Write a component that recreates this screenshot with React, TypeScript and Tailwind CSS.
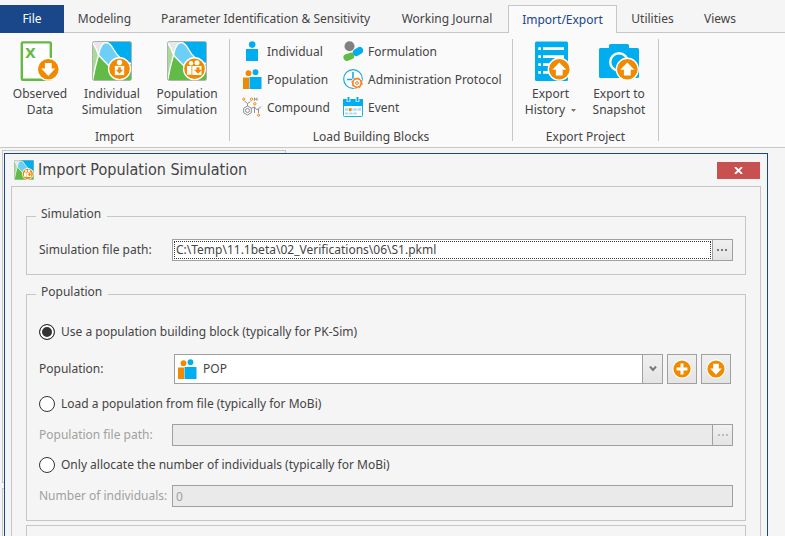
import { useId, useState } from "react";
import type { ReactNode } from "react";

const TABS = [
  { label: "File", width: "w-16" },
  { label: "Modeling", width: "w-[81px]" },
  { label: "Parameter Identification & Sensitivity", width: "w-[241px]" },
  { label: "Working Journal", width: "w-[122px]" },
  { label: "Import/Export", width: "w-[109px]" },
  { label: "Utilities", width: "w-[71px]" },
  { label: "Views", width: "w-16" },
];

type PopulationSource = "block" | "file" | "count";

/* ---------- icons ---------- */

function DownArrow() {
  return <path d="M-3.4 -6.2H3.4V-0.6H7L0 6.8L-7 -0.6H-3.4Z" fill="#fff" />;
}

function Badge({ children }: { children: ReactNode }) {
  return (
    <>
      <circle r="11.6" fill="#fff" />
      <circle r="10.3" fill="#f18a00" />
      {children}
    </>
  );
}

function ObservedDataIcon() {
  return (
    <svg viewBox="0 0 40 40" className="size-10">
      <rect x="1.8" y="1.4" width="29" height="37.4" rx="1" fill="#fff" stroke="#65b945" strokeWidth="2.4" />
      <text x="5" y="17" fontSize="14" fontWeight="700" fill="#65b945" className="font-[DejaVu_Sans]">X</text>
      <g transform="translate(28.3 28.2)">
        <Badge><DownArrow /></Badge>
      </g>
    </svg>
  );
}

function SimulationIcon({ kind, className }: { kind: "individual" | "population"; className: string }) {
  const clip = useId();
  return (
    <svg viewBox="0 0 40 40" className={className}>
      <clipPath id={clip}>
        <rect x="0.5" y="0.5" width="39" height="39" rx="2" />
      </clipPath>
      <g clipPath={`url(#${clip})`}>
        <rect width="40" height="40" fill="#62bb46" />
        <path d="M0 40V3Q4 7 6.5 14Q3 26 1 40Z" fill="#aad99a" />
        <path d="M0 0H14Q9 3 6.5 14Q4 7 0 3Z" fill="#e6e7e8" />
        <path d="M14 1Q18 1 22 9Q27 19 40 23V0H14Z" fill="#00aeef" />
        <path d="M6.5 14Q9 1.5 14 1.5Q18 1.5 22 9Q27 19 40 23L24 33Q14 22 6.5 14Z" fill="#6dcff6" />
        <path d="M0.5 40Q3 26 6.5 14Q9 1.5 14 1.5Q18 1.5 22 9Q27 19 40 23" fill="none" stroke="#fff" strokeWidth="1.3" />
        <path d="M0 1Q4 6 6.5 14Q12 20 18 26Q24 32 28 40" fill="none" stroke="#fff" strokeWidth="1.3" />
      </g>
      <rect x="0.5" y="0.5" width="39" height="39" rx="2" fill="none" stroke="#aeb3b0" />
      <g transform="translate(27.5 27.7)">
        <Badge>
          {kind === "individual" ? (
            <>
              <circle cy="-6.2" r="2.7" fill="#fff" />
              <rect x="-4.7" y="-2.8" width="9.4" height="9.2" fill="#fff" />
              <path d="M-1.3 -1.5H1.3V1H3.6L0 5L-3.6 1H-1.3Z" fill="#f18a00" />
            </>
          ) : (
            <>
              <circle cx="-3.5" cy="-5.5" r="2.2" fill="#fff" />
              <circle cx="2.5" cy="-6" r="2.5" fill="#fff" />
              <path d="M-7.5 -2.8H-3V6H-7.5ZM-2.2 -2.8H7V6.4H-2.2Z" fill="#fff" />
              <path d="M2 -1.5H5V1H7.5L3.5 5L-0.5 1H2Z" fill="#f18a00" />
            </>
          )}
        </Badge>
      </g>
    </svg>
  );
}

function HistoryIcon() {
  return (
    <svg viewBox="0 0 40 40" className="size-10">
      <rect x="4" y="0.5" width="33" height="39.5" rx="1.5" fill="#00aeef" />
      <g fill="#fff">
        <path d="M7.3 6.3H10V9H7.3ZM12 6.3H33V9H12Z" />
        <path d="M7.3 14.3H10V17H7.3ZM12 14.3H33V17H12Z" />
        <path d="M7.3 22.3H10V25H7.3ZM12 22.3H22V25H12Z" />
        <path d="M7.3 30H10V32.7H7.3ZM12 30H22V32.7H12Z" />
      </g>
      <g transform="translate(28.3 28.2)">
        <Badge><g transform="scale(1 -1)"><DownArrow /></g></Badge>
      </g>
    </svg>
  );
}

function SnapshotIcon() {
  return (
    <svg viewBox="0 0 40 40" className="size-10">
      <path d="M1.5 7H10V4.5Q10 3 11.5 3H28.5Q30 3 30 4.5V7H38.5Q40 7 40 8.5V35.5Q40 37 38.5 37H1.5Q0 37 0 35.5V8.5Q0 7 1.5 7Z" fill="#00aeef" />
      <circle cx="20" cy="21" r="8.8" fill="none" stroke="#fff" strokeWidth="2.4" />
      <g transform="translate(28.3 28.2)">
        <Badge><g transform="scale(1 -1)"><DownArrow /></g></Badge>
      </g>
    </svg>
  );
}

function IndividualIcon() {
  return (
    <svg viewBox="0 0 20 20" className="size-5">
      <circle cx="10.2" cy="3.6" r="3.3" fill="#00aeef" />
      <rect x="4" y="8" width="12" height="12" fill="#00aeef" />
    </svg>
  );
}

function PopulationIcon() {
  return (
    <svg viewBox="0 0 20 20" className="size-5">
      <circle cx="6.5" cy="4.2" r="2.9" fill="#f18a00" />
      <circle cx="13.5" cy="3.2" r="2.9" fill="#00aeef" />
      <rect x="1" y="8.5" width="6" height="11.5" fill="#f18a00" />
      <rect x="7.5" y="8" width="12" height="12" fill="#00aeef" />
    </svg>
  );
}

function CompoundIcon() {
  return (
    <svg viewBox="0 0 20 20" className="size-5" fill="none" stroke="#8f8f8f">
      <path d="M5.5 9L9.3 11.2V15.8L5.5 18L1.7 15.8V11.2Z" />
      <circle cx="5.5" cy="13.5" r="2" />
      <path d="M5.5 9V6.5L2.5 4M5.5 6.5L8.5 4.5M9.3 11.2L12.5 10V16M12.5 10L14.5 12.5L16.5 12M16.5 16V12L19 9.5" />
      <g stroke="#f18a00">
        <circle cx="1.8" cy="2.2" r="1.1" />
        <circle cx="9.5" cy="2.2" r="1.2" />
        <circle cx="12.8" cy="6.8" r="1.2" />
        <circle cx="16.6" cy="18.2" r="1.1" />
      </g>
      <path d="M12.5 0.7V3.7M15 0.7V3.7M12.5 2.2H15" />
    </svg>
  );
}

function FormulationIcon() {
  return (
    <svg viewBox="0 0 20 20" className="size-5">
      <circle cx="6.5" cy="5.3" r="5" fill="#808080" />
      <rect x="9.5" y="7" width="11" height="7" rx="3.5" fill="#00aeef" transform="rotate(-32 15 10.5)" />
      <rect x="0.3" y="12.3" width="11" height="6.8" rx="3.4" fill="#62bb46" transform="rotate(-18 6 15.7)" />
    </svg>
  );
}

function ProtocolIcon() {
  return (
    <svg viewBox="0 0 20 20" className="size-5" fill="none">
      <circle cx="10" cy="10" r="9.3" fill="#fff" stroke="#1ba8e0" strokeWidth="1.2" />
      <path d="M10 3V10.5H4" stroke="#1ba8e0" strokeWidth="1.6" />
      <circle cx="14" cy="14" r="6" fill="#fff" />
      <circle cx="14" cy="14" r="4.2" stroke="#ef7d22" strokeWidth="1.6" />
      <circle cx="14" cy="14" r="5.2" stroke="#ef7d22" strokeWidth="1" strokeDasharray="2 2.08" />
      <circle cx="14" cy="14" r="1.4" stroke="#ef7d22" />
    </svg>
  );
}

function EventIcon() {
  return (
    <svg viewBox="0 0 20 20" className="size-5">
      <rect x="0.5" y="2.5" width="19" height="17" rx="1" fill="#fff" stroke="#1bb0ec" />
      <path d="M0 2H20V9H0Z" fill="#00aeef" />
      <path d="M5.5 0V5M14.5 0V5" stroke="#fafafa" strokeWidth="3.6" />
      <path d="M5.5 0V4.5M14.5 0V4.5" stroke="#00aeef" strokeWidth="2" />
      <path d="M2 12.5H18" stroke="#a5ddf7" strokeWidth="2.6" strokeDasharray="3.4 0.8" />
      <path d="M2 16.5H14" stroke="#a5ddf7" strokeWidth="2" strokeDasharray="3.4 0.8" />
      <rect x="6" y="11.2" width="2.4" height="3" fill="#f18a00" />
    </svg>
  );
}

function Dots() {
  return (
    <svg viewBox="0 0 10 2" className="h-[2px] w-[10px]" fill="currentColor">
      <path d="M0 0H2V2H0ZM4 0H6V2H4ZM8 0H10V2H8Z" />
    </svg>
  );
}

/* ---------- ribbon ---------- */

function LargeButton({ icon, lines, menu, width }: { icon: ReactNode; lines: [string, string]; menu?: boolean; width: string }) {
  return (
    <button className={`flex flex-col items-center whitespace-nowrap ${width}`}>
      {icon}
      <span className="mt-[5px]">{lines[0]}</span>
      <span className="flex items-center gap-[6px]">
        {lines[1]}
        {menu && <svg viewBox="0 0 5 3" className="h-[3px] w-[5px]"><path d="M0 0H5L2.5 3Z" fill="#777" /></svg>}
      </span>
    </button>
  );
}

function SmallButton({ icon, label }: { icon: ReactNode; label: string }) {
  return (
    <button className="flex h-5 items-center gap-[5px] whitespace-nowrap">
      {icon}
      <span className="pt-[2px]">{label}</span>
    </button>
  );
}

function RibbonGroup({ title, width, children }: { title: string; width: string; children: ReactNode }) {
  return (
    <section className={`flex shrink-0 flex-col justify-between border-r border-[#c6c6c6] pt-[2px] ${width}`}>
      {children}
      <h2 className="text-center leading-2">{title}</h2>
    </section>
  );
}

/* ---------- form ---------- */

function Group({ title, children }: { title: string; children: ReactNode }) {
  return (
    <fieldset className="min-w-0 border border-[#c6c6c6] px-3 pb-[13px]">
      <legend className="-ml-[3px] pr-[6px] pb-[5px] pl-[5px]">{title}</legend>
      {children}
    </fieldset>
  );
}

function SourceRadio({ label, checked, onChange, className }: { label: string; checked: boolean; onChange: () => void; className: string }) {
  return (
    <label className={`flex items-center gap-[6px] ${className}`}>
      <input
        type="radio"
        name="source"
        checked={checked}
        onChange={onChange}
        className="size-4 appearance-none rounded-full border border-[#333] bg-white checked:bg-[#333] checked:shadow-[inset_0_0_0_2px_#fff]"
      />
      {label}
    </label>
  );
}

export default function App() {
  const [activeTab, setActiveTab] = useState("Import/Export");
  const [source, setSource] = useState<PopulationSource>("block");
  const [simulationPath, setSimulationPath] = useState("C:\\Temp\\11.1beta\\02_Verifications\\06\\S1.pkml");

  const fileDisabled = source !== "file";
  const countDisabled = source !== "count";

  return (
    <div className="flex h-screen flex-col overflow-hidden bg-[#f5f5f5] font-['Noto_Sans',sans-serif] text-[12px] leading-4 text-[#444]">
      {/* Tabs */}
      <nav className="flex shrink-0 pt-[5px]">
        {TABS.map(({ label, width }) => (
          <button
            key={label}
            onClick={() => setActiveTab(label)}
            className={`h-7 shrink-0 whitespace-nowrap ${width} ${
              label === "File"
                ? "bg-[#19478a] text-white"
                : label === activeTab
                  ? "border border-b-0 border-[#c6c6c6] bg-[#fafafa] text-[#19478a]"
                  : "border-b border-[#c6c6c6]"
            }`}
          >
            {label}
          </button>
        ))}
        <div className="flex-1 border-b border-[#c6c6c6]" />
      </nav>

      {/* Ribbon */}
      <div className="flex h-[115px] shrink-0 border-b border-[#c6c6c6] bg-[#fafafa] pt-[6px] pb-[6px]">
        <RibbonGroup title="Import" width="w-[230px]">
          <div className="flex pl-[3px]">
            <LargeButton icon={<ObservedDataIcon />} lines={["Observed", "Data"]} width="w-[74px]" />
            <LargeButton icon={<SimulationIcon kind="individual" className="size-10" />} lines={["Individual", "Simulation"]} width="w-[70px]" />
            <LargeButton icon={<SimulationIcon kind="population" className="size-10" />} lines={["Population", "Simulation"]} width="w-20" />
          </div>
        </RibbonGroup>
        <RibbonGroup title="Load Building Blocks" width="w-[283px]">
          <div className="grid grid-cols-[101px_1fr] gap-y-2 pl-3">
            <SmallButton icon={<IndividualIcon />} label="Individual" />
            <SmallButton icon={<FormulationIcon />} label="Formulation" />
            <SmallButton icon={<PopulationIcon />} label="Population" />
            <SmallButton icon={<ProtocolIcon />} label="Administration Protocol" />
            <SmallButton icon={<CompoundIcon />} label="Compound" />
            <SmallButton icon={<EventIcon />} label="Event" />
          </div>
        </RibbonGroup>
        <RibbonGroup title="Export Project" width="w-[146px]">
          <div className="flex pl-1">
            <LargeButton icon={<HistoryIcon />} lines={["Export", "History"]} menu width="w-[67px]" />
            <LargeButton icon={<SnapshotIcon />} lines={["Export to", "Snapshot"]} width="w-[70px]" />
          </div>
        </RibbonGroup>
      </div>

      <main className="grid min-h-0 flex-1">
        {/* Docked panels behind the dialog */}
        <div className="col-start-1 row-start-1 flex w-[286px] flex-col gap-[5px] pt-[2px] pl-[2px]">
          <div className="h-[333px] shrink-0 border border-[#c6c6c6]" />
          <div className="h-16 shrink-0 border border-[#c6c6c6]" />
        </div>

        {/* Dialog */}
        <div
          role="dialog"
          aria-labelledby="dialog-title"
          className="z-10 col-start-1 row-start-1 mt-[5px] mr-[17px] ml-1 flex min-w-0 flex-col border border-b-0 border-[#19478a] bg-[#f5f5f5] px-[6px]"
        >
          <header className="flex h-8 shrink-0 items-center gap-1 pr-px pl-[3px]">
            <SimulationIcon kind="population" className="size-5" />
            <h1 id="dialog-title" className="flex-1 font-['DejaVu_Sans_Condensed','Noto_Sans',sans-serif] text-[16px]">Import Population Simulation</h1>
            <button aria-label="Close" className="flex h-[17px] w-[43px] items-center justify-center bg-[#c75050]">
              <svg viewBox="0 0 9 7" className="h-[7px] w-[9px]"><path d="M1 0L8 7M8 0L1 7" stroke="#fff" strokeWidth="1.8" /></svg>
            </button>
          </header>

          <form className="flex flex-1 flex-col border border-b-0 border-[#c6c6c6] px-[14px] pt-[19px]">
            <Group title="Simulation">
              <div className="flex items-center pt-3">
                <label htmlFor="simulation-path" className="w-[133px] shrink-0">Simulation file path:</label>
                <div className="flex h-[22px] min-w-0 flex-1 border border-[#a0a0a0] bg-white">
                  <div className="flex min-w-0 flex-1 p-px">
                    <input
                      id="simulation-path"
                      value={simulationPath}
                      onChange={(e) => setSimulationPath(e.target.value)}
                      className="min-w-0 flex-1 border border-dotted border-[#333] px-px outline-none"
                    />
                  </div>
                  <button type="button" aria-label="Browse simulation file" className="flex w-5 items-center justify-center border-l border-[#a0a0a0] bg-linear-to-b from-[#f0f0f0] to-[#e4e4e4] pr-[2px] text-[#777]">
                    <Dots />
                  </button>
                </div>
              </div>
            </Group>

            <div className="mt-[9px]">
              <Group title="Population">
                <SourceRadio
                  label="Use a population building block (typically for PK-Sim)"
                  checked={source === "block"}
                  onChange={() => setSource("block")}
                  className="pt-[19px]"
                />
                <div className="mt-[14px] flex items-center gap-1 pr-[2px]">
                  <label htmlFor="population" className="w-[131px] shrink-0">Population:</label>
                  <div className="flex h-[30px] min-w-0 flex-1 items-center border border-[#a0a0a0] bg-white pl-[2px]">
                    <PopulationIcon />
                    <select id="population" className="h-full min-w-0 flex-1 appearance-none pl-[6px] outline-none">
                      <option>POP</option>
                    </select>
                    <span className="pointer-events-none flex h-full w-5 items-center justify-center border-l border-[#a0a0a0] bg-linear-to-b from-[#f0f0f0] to-[#e4e4e4]">
                      <svg viewBox="0 0 8 6" className="h-[6px] w-2"><path d="M1 0.5L4 4L7 0.5" fill="none" stroke="#777" strokeWidth="2" /></svg>
                    </span>
                  </div>
                  <button type="button" aria-label="Add population" className="flex size-[30px] shrink-0 items-center justify-center border border-[#a0a0a0] bg-linear-to-b from-[#f0f0f0] to-[#e4e4e4]">
                    <svg viewBox="-12 -12 24 24" className="size-5">
                      <Badge><path d="M-1.8 -6.5H1.8V-1.8H6.5V1.8H1.8V6.5H-1.8V1.8H-6.5V-1.8H-1.8Z" fill="#fff" /></Badge>
                    </svg>
                  </button>
                  <button type="button" aria-label="Load population" className="flex size-[30px] shrink-0 items-center justify-center border border-[#a0a0a0] bg-linear-to-b from-[#f0f0f0] to-[#e4e4e4]">
                    <svg viewBox="-12 -12 24 24" className="size-5">
                      <Badge><DownArrow /></Badge>
                    </svg>
                  </button>
                </div>

                <SourceRadio
                  label="Load a population from file (typically for MoBi)"
                  checked={source === "file"}
                  onChange={() => setSource("file")}
                  className="mt-3"
                />
                <div className="mt-3 flex items-center">
                  <label htmlFor="population-path" className={`w-[133px] shrink-0 ${fileDisabled ? "text-[#a0a0a0]" : ""}`}>Population file path:</label>
                  <div className="flex h-[22px] min-w-0 flex-1 border border-[#a0a0a0]">
                    <input id="population-path" disabled={fileDisabled} className="min-w-0 flex-1 bg-white px-[3px] outline-none disabled:bg-[#eaeaea]" />
                    <button type="button" disabled={fileDisabled} aria-label="Browse population file" className="flex w-5 items-center justify-center border-l border-[#a0a0a0] bg-linear-to-b from-[#f0f0f0] to-[#e4e4e4] text-[#777] disabled:text-[#bbb]">
                      <Dots />
                    </button>
                  </div>
                </div>

                <SourceRadio
                  label="Only allocate the number of individuals (typically for MoBi)"
                  checked={source === "count"}
                  onChange={() => setSource("count")}
                  className="mt-[11px]"
                />
                <div className="mt-3 flex items-center">
                  <label htmlFor="individual-count" className={`w-[133px] shrink-0 whitespace-nowrap ${countDisabled ? "text-[#a0a0a0]" : ""}`}>Number of individuals:</label>
                  <input
                    id="individual-count"
                    defaultValue="0"
                    disabled={countDisabled}
                    className="h-[22px] min-w-0 flex-1 border border-[#a0a0a0] bg-white px-[3px] outline-none disabled:bg-[#eaeaea] disabled:text-[#a0a0a0]"
                  />
                </div>
              </Group>
            </div>

            <fieldset className="mt-1 h-16 shrink-0 border border-[#c6c6c6]" />
          </form>
        </div>
      </main>
    </div>
  );
}
